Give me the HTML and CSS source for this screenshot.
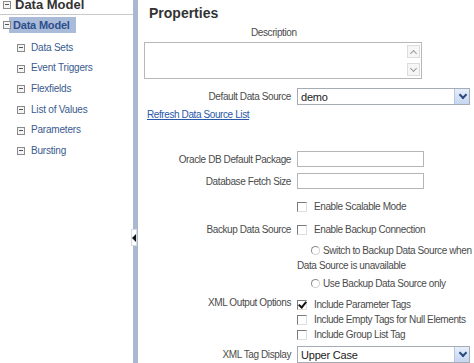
FILE: index.html
```html
<!DOCTYPE html>
<html lang="en">
<head>
    <meta charset="UTF-8">
    <title>Data Model Properties</title>
    <link rel="stylesheet" href="styles.css">
</head>
<body>
<div class="page">

    <!-- LEFT TREE -->
    <aside class="tree">
        <div class="tree-head"><span class="box"></span>Data Model</div>
        <div class="root"><span class="box"></span><span class="sel">Data Model</span></div>
        <ul class="items">
            <li><span class="box"></span>Data Sets</li>
            <li><span class="box"></span>Event Triggers</li>
            <li><span class="box"></span>Flexfields</li>
            <li><span class="box"></span>List of Values</li>
            <li><span class="box"></span>Parameters</li>
            <li><span class="box"></span>Bursting</li>
        </ul>
    </aside>

    <!-- SPLITTER -->
    <div class="splitter"><span class="handle"></span></div>

    <!-- PROPERTIES -->
    <main class="props">
        <h1>Properties</h1>
        <div class="desc-label">Description</div>
        <div class="textarea">
            <div class="scroll"><span class="up"></span><span class="down"></span></div>
        </div>

        <div class="row first">
            <label>Default Data Source</label>
            <div class="select wide"><span>demo</span><span class="drop"></span></div>
        </div>
        <a class="link" href="#">Refresh Data Source List</a>

        <div class="row pkg">
            <label>Oracle DB Default Package</label>
            <div class="input"></div>
        </div>
        <div class="row fetch">
            <label>Database Fetch Size</label>
            <div class="input"></div>
        </div>
        <div class="row scal">
            <label></label>
            <div class="opt"><span class="check"></span>Enable Scalable Mode</div>
        </div>
        <div class="row backup">
            <label>Backup Data Source</label>
            <div class="opt"><span class="check"></span>Enable Backup Connection</div>
        </div>
        <div class="row radio1">
            <label></label>
            <div class="radio-text"><span class="radio"></span>Switch to Backup Data Source when<br>Data Source is unavailable</div>
        </div>
        <div class="row radio2">
            <label></label>
            <div class="opt indent"><span class="radio"></span>Use Backup Data Source only</div>
        </div>
        <div class="row xml">
            <label>XML Output Options</label>
            <div class="opts">
                <div class="opt"><span class="check on"></span>Include Parameter Tags</div>
                <div class="opt"><span class="check"></span>Include Empty Tags for Null Elements</div>
                <div class="opt"><span class="check"></span>Include Group List Tag</div>
            </div>
        </div>
        <div class="row tag">
            <label>XML Tag Display</label>
            <div class="select wide"><span>Upper Case</span><span class="drop"></span></div>
        </div>
    </main>
</div>
</body>
</html>
```

FILE: styles.css
```css
* { margin: 0; padding: 0; box-sizing: border-box; }
body {
    background: #fff; font-family: "Liberation Sans", Arial, sans-serif; font-size: 10px;
    letter-spacing: -0.4px; color: #4b4b4b; overflow: hidden;
}

.page { display: flex; height: 363px; overflow: hidden; }

/* TREE */
.tree { width: 133px; flex: none; }

.tree-head {
    margin-top: -5px; height: 20px; display: flex; align-items: center;
    font-size: 13px; font-weight: bold; color: #333; padding-left: 3px; letter-spacing: 0;
    border-bottom: 1px solid #c9c9c9;
}
.tree-head .box { margin-right: 4px; }

.box {
    display: inline-block; width: 8px; height: 8px; flex: none; position: relative;
    border: 1px solid #8a8a8a; background: #f4f4f4;
}
.box::after {
    content: ""; position: absolute; left: 1px; right: 1px; top: 2px; height: 1px; background: #555;
}

.root { display: flex; align-items: center; padding-left: 3px; margin-top: 2px; height: 16px; }
.root .sel {
    background: #a9bbd8; color: #2c4f8c; font-weight: bold; font-size: 11px;
    padding: 1px 6px 1px 4px; line-height: 14px; margin-left: -2px; letter-spacing: -0.2px;
}
.root .box { position: relative; z-index: 1; }

.items { list-style: none; margin-top: 4px; }
.items li {
    display: flex; align-items: center; height: 20.6px; padding-left: 17px;
    color: #3a5a8e; letter-spacing: -0.2px;
}
.items li .box { margin-right: 6px; margin-top: 2px; }

/* SPLITTER */
.splitter { width: 5px; flex: none; background: #a8b8d1; position: relative; }
.handle {
    position: absolute; left: -2px; top: 229px; width: 6px; height: 17px;
    background: #fff; border: 1px solid #d5dbe5;
}
.handle::after {
    content: ""; position: absolute; left: 0; top: 4px;
    border-right: 4px solid #111; border-top: 4px solid transparent; border-bottom: 4px solid transparent;
}

/* PROPERTIES */
.props { flex: 1; padding-left: 6px; }

h1 { font-size: 14px; font-weight: bold; color: #333; margin-top: 5px; padding-left: 5px; line-height: 16px; letter-spacing: 0; }

.desc-label { margin-top: 6px; margin-left: 107px; line-height: 12px; }

.textarea {
    width: 278px; height: 37px; margin-top: 3px; border: 1px solid #b8b8b8; position: relative;
}
.scroll {
    position: absolute; right: 0; top: 0; bottom: 0; width: 15px;
    display: flex; flex-direction: column; justify-content: space-between; padding: 2px 1px;
}
.up, .down {
    display: block; height: 13px; border: 1px solid #dcdcdc; background: #f6f6f6; position: relative;
}
.up::after, .down::after {
    content: ""; position: absolute; left: 3px; top: 3px; width: 4px; height: 4px;
    border-left: 1px solid #9a9a9a; border-top: 1px solid #9a9a9a;
}
.up::after { transform: rotate(45deg); top: 5px; }
.down::after { transform: rotate(225deg); top: 2px; }

.row { display: flex; align-items: center; }
.row label { width: 153px; flex: none; text-align: right; padding-right: 6px; }

.first { margin-top: 9px; }

.select {
    height: 17px; border: 1px solid #a5acb5; display: flex; align-items: center;
    justify-content: space-between; padding-left: 3px; color: #222; font-size: 11px; letter-spacing: -0.2px;
}
.wide { width: 173px; }
.drop {
    width: 15px; height: 15px; background: linear-gradient(#e6eefb, #c5d6f0);
    border-left: 1px solid #b9c7de; position: relative;
}
.drop::after {
    content: ""; position: absolute; left: 5px; top: 3px; width: 4px; height: 4px;
    border-right: 2px solid #2c4a80; border-bottom: 2px solid #2c4a80; transform: rotate(45deg);
}

.link { display: block; color: #2a58a8; margin-top: 4px; margin-left: 3px; line-height: 12px; }

.input { width: 127px; height: 16px; border: 1px solid #b5b5b5; }

.pkg { margin-top: 30px; }
.fetch { margin-top: 6px; }
.scal { margin-top: 10px; }
.backup { margin-top: 8px; }
.radio1 { margin-top: 6px; align-items: flex-start; }
.radio2 { margin-top: 3px; }
.xml { margin-top: 6px; align-items: flex-start; }
.tag { margin-top: 4px; }

.opt { display: flex; align-items: center; line-height: 15px; white-space: nowrap; }
.opts .opt { height: 15px; }
.check {
    display: inline-block; width: 10px; height: 10px; margin-right: 7px; position: relative; flex: none;
    border-top: 1px solid #7a7a7a; border-left: 1px solid #7a7a7a;
    border-right: 1px solid #dedede; border-bottom: 1px solid #dedede;
}
.check.on::after {
    content: ""; position: absolute; left: 2px; top: -1px; width: 3px; height: 6px;
    border-right: 2px solid #111; border-bottom: 2px solid #111; transform: rotate(40deg);
}

.radio-text { line-height: 15px; white-space: nowrap; }
.radio-text .radio { margin-left: 14px; }
.radio {
    display: inline-block; width: 9px; height: 9px; border-radius: 50%; margin-right: 3px; flex: none;
    border: 1px solid #cfcfcf; border-top-color: #8c8c8c; border-left-color: #8c8c8c;
    vertical-align: -1px;
}
.indent { padding-left: 14px; }
```
